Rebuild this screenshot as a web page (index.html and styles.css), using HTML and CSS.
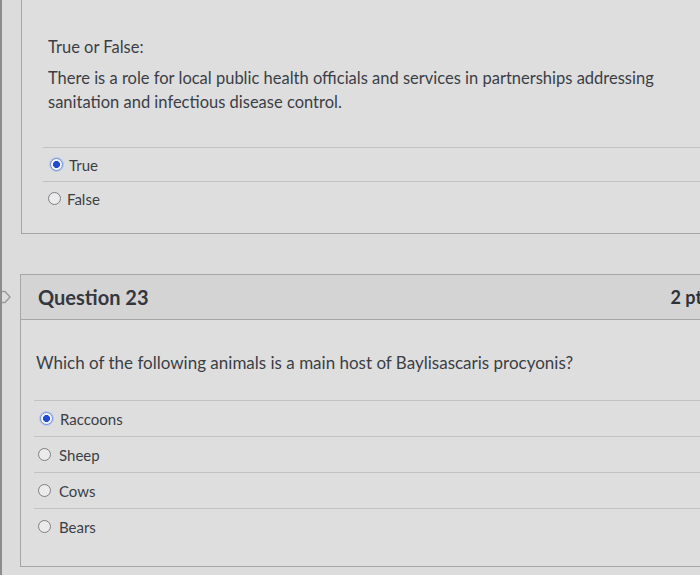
FILE: index.html
```html
<!DOCTYPE html>
<html lang="en">
<head>
<meta charset="utf-8">
<title>Quiz</title>
<link rel="stylesheet" href="styles.css">
</head>
<body>
<div class="page">
  <section class="card card-first">
    <div class="body first-body">
      <p class="q-text">True or False:</p>
      <p class="q-text">There is a role for local public health officials and services in partnerships addressing sanitation and infectious disease control.</p>
    </div>
    <ul class="answers answers-first">
      <li class="answer"><span class="radio checked"></span><span class="label">True</span></li>
      <li class="answer"><span class="radio"></span><span class="label">False</span></li>
    </ul>
  </section>

  <div class="q-row">
    <svg class="flag" width="12" height="14" viewBox="0 0 12 14"><path d="M-4 1.5 H5 L10 7 L5 12.5 H-4" fill="none" stroke="#9a9a9e" stroke-width="1.4"/></svg>
    <section class="card card-second">
      <header class="q-header">
        <h2 class="q-title">Question 23</h2>
        <span class="q-points">2 pts</span>
      </header>
      <div class="body second-body">
        <p class="q-text q-text-lg">Which of the following animals is a main host of Baylisascaris procyonis?</p>
      </div>
      <ul class="answers answers-second">
        <li class="answer"><span class="radio checked"></span><span class="label">Raccoons</span></li>
        <li class="answer"><span class="radio"></span><span class="label">Sheep</span></li>
        <li class="answer"><span class="radio"></span><span class="label">Cows</span></li>
        <li class="answer"><span class="radio"></span><span class="label">Bears</span></li>
      </ul>
    </section>
  </div>
</div>
</body>
</html>
```

FILE: styles.css
```css
html, body {
  margin: 0;
  padding: 0;
}
body {
  background: #dcdcdc;
  font-family: Lato, "Open Sans", sans-serif;
  color: #3b3e46;
  width: 700px;
  height: 575px;
  overflow: hidden;
}
.page {
  border-left: 2px solid #8c8c8e;
  height: 575px;
  box-sizing: border-box;
  padding-left: 18px;
  overflow: hidden;
}
.card {
  border: 1px solid #a6a6a8;
  border-right: none;
  background: #dedede;
  width: 720px;
}
.card-first {
  border-top: none;
  margin-left: 1px;
  padding-bottom: 18px;
}
.first-body {
  padding: 35px 0 0 26px;
}
.q-text {
  margin: 0;
  font-size: 16.5px;
  line-height: 24px;
  max-width: 640px;
}
.q-text-lg {
  font-size: 17px;
}
.first-body .q-text + .q-text {
  margin-top: 7px;
}
.answers {
  list-style: none;
  margin: 0;
  padding: 0;
}
.answers-first {
  margin: 33px 0 0 21px;
}
.answer {
  display: flex;
  align-items: center;
  gap: 6px;
  height: 33px;
  border-top: 1px solid #c2c2c4;
  padding-left: 7px;
  font-size: 15px;
}
.answers-first .answer:last-child {
  padding-left: 5px;
}
.answers-second .answer {
  height: 35px;
  padding-left: 4px;
  gap: 8px;
}
.answers-second .answer:first-child {
  padding-left: 6px;
  gap: 7px;
}
.radio {
  width: 11px;
  height: 11px;
  border-radius: 50%;
  border: 1px solid #7d7f85;
  background: #ebebeb;
  flex: none;
}
.radio.checked {
  border: 1.5px solid #6b8fe0;
  background: radial-gradient(circle, #1f4fd0 0 3.2px, #f2f4fa 3.8px);
  box-shadow: 0 0 0 1px #b9c8ee;
}
.q-row {
  display: flex;
  align-items: flex-start;
  margin-top: 40px;
  margin-left: -20px;
}
.flag {
  margin-top: 16px;
  margin-right: 8px;
  flex: none;
}
.card-second {
  flex: none;
  width: 720px;
  padding-bottom: 22px;
}
.q-header {
  display: flex;
  align-items: center;
  justify-content: space-between;
  height: 44px;
  background: #d4d4d5;
  border-bottom: 1px solid #a6a6a8;
  padding: 0 0 0 17px;
}
.q-title {
  margin: 0;
  font-size: 20px;
  font-weight: 700;
  color: #34373e;
}
.q-points {
  font-size: 18px;
  font-weight: 700;
  color: #2f3238;
  margin-right: 31px;
  white-space: nowrap;
}
.second-body {
  padding: 31px 0 0 15px;
}
.answers-second {
  margin: 25px 0 0 13px;
}
```
